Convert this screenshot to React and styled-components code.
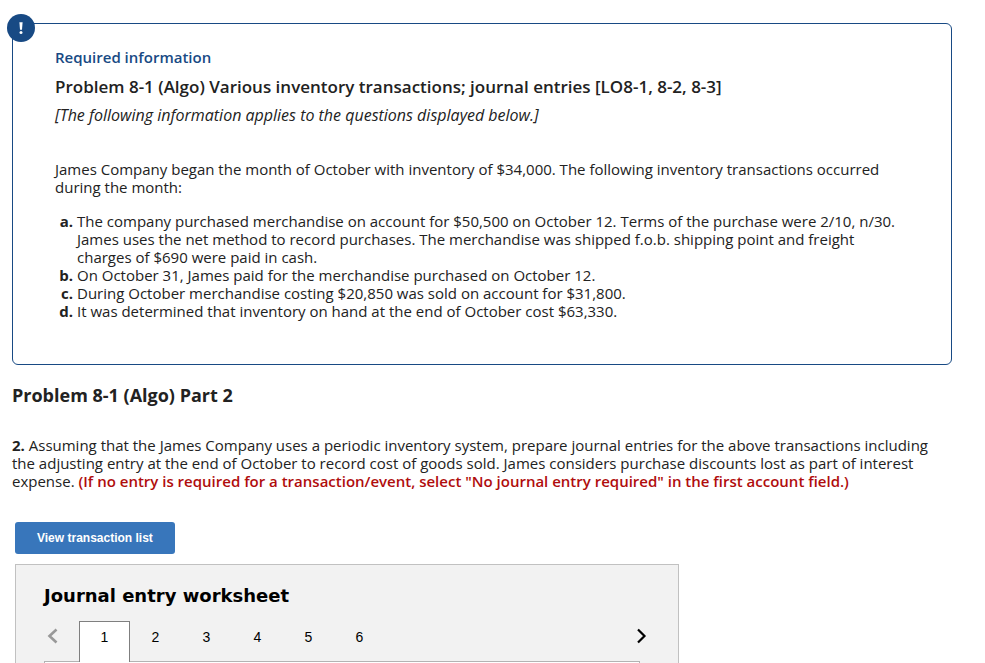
import React, { useState } from "react";
import styled, { createGlobalStyle } from "styled-components";

const GlobalStyle = createGlobalStyle`
  *, *::before, *::after { box-sizing: border-box; }
  body {
    margin: 0;
    background: #fff;
    color: #222;
    font-family: "Open Sans", "Noto Sans", sans-serif;
    font-size: 15px;
    line-height: 18px;
  }
`;

const Page = styled.main`
  padding: 23px 33px 0 12px;
  height: 100vh;
  overflow: hidden;
`;

const InfoCard = styled.section`
  position: relative;
  border: 1px solid #184a84;
  border-radius: 6px;
  padding: 23px 42px 44px;
`;

const AlertBadge = styled.span`
  position: absolute;
  top: -10px;
  left: -6px;
  width: 28px;
  height: 28px;
  border-radius: 50%;
  background: #184a84;
  color: #fff;
  display: grid;
  place-items: center;
`;

const InfoLabel = styled.h2`
  margin: 0 0 11px;
  color: #184a84;
  font-size: 15px;
  line-height: 20px;
  font-weight: 600;
`;

const ProblemTitle = styled.h1`
  margin: 0 0 10px;
  font-size: 17px;
  line-height: 18px;
  font-weight: 600;
`;

const Note = styled.p`
  margin: 0 0 36px;
  font-size: 16px;
  font-style: italic;
`;

const Intro = styled.p`
  margin: 0 0 16px;
`;

const Transactions = styled.ul`
  margin: 0;
  padding: 0 0 0 4px;
  list-style: none;
`;

const Transaction = styled.li`
  display: grid;
  grid-template-columns: 14px 1fr;
  column-gap: 4px;
`;

const Marker = styled.b`
  text-align: right;
`;

const PartTitle = styled.h2`
  margin: 19px 0 30px;
  font-size: 18px;
  line-height: 22px;
  font-weight: 700;
`;

const Question = styled.p`
  margin: 0 0 32px;
`;

const Warning = styled.strong`
  color: #b00d0d;
  font-weight: 600;
`;

const ListButton = styled.button`
  display: block;
  margin: 0 0 10px 3px;
  padding: 0 22px;
  height: 32px;
  border: 0;
  border-radius: 3px;
  background: #3876bb;
  color: #fff;
  font: bold 12px/16px "Liberation Sans", Arial, sans-serif;
  cursor: pointer;
`;

const Worksheet = styled.section`
  margin-left: 3px;
  max-width: 664px;
  border: 1px solid #c1c1c1;
  background: #f2f2f2;
  padding: 19px 28px 0;
  color: #000;
`;

const WorksheetTitle = styled.h2`
  margin: 0 0 13px;
  font: bold 18px/24px "DejaVu Sans", Verdana, sans-serif;
`;

const TabBar = styled.nav`
  display: flex;
  align-items: flex-start;
`;

const Tab = styled.button`
  width: 51px;
  height: 41px;
  padding: 0 0 10px;
  border: 1px solid ${(p) => (p.$active ? "#7f7f7f" : "transparent")};
  border-bottom: 0;
  background: ${(p) => (p.$active ? "#fff" : "transparent")};
  color: #000;
  font: 14px/16px "Liberation Sans", Arial, sans-serif;
  position: relative;
  cursor: pointer;
`;

const Arrow = styled.button`
  display: grid;
  place-items: center;
  width: 16px;
  height: 30px;
  padding: 0;
  border: 0;
  background: none;
  color: ${(p) => (p.disabled ? "#999" : "#000")};
  margin: ${(p) => (p.$next ? "0 0 0 auto" : "0 19px 0 0")};
`;

const Sheet = styled.div`
  border: 1px solid #b3b3b3;
  background: #fff;
  height: 200px;
  margin: -1px 10px 0 0;
`;

const transactions = [
  ["a.", "The company purchased merchandise on account for $50,500 on October 12. Terms of the purchase were 2/10, n/30. James uses the net method to record purchases. The merchandise was shipped f.o.b. shipping point and freight charges of $690 were paid in cash."],
  ["b.", "On October 31, James paid for the merchandise purchased on October 12."],
  ["c.", "During October merchandise costing $20,850 was sold on account for $31,800."],
  ["d.", "It was determined that inventory on hand at the end of October cost $63,330."],
];

const Chevron = ({ d, weight }) => (
  <svg width="16" height="18" viewBox="0 0 16 18" fill="none" stroke="currentColor" strokeWidth={weight} aria-hidden="true">
    <path d={d} />
  </svg>
);

export default function App() {
  const [active, setActive] = useState(1);
  return (
    <>
      <GlobalStyle />
      <Page>
        <InfoCard>
          <AlertBadge>
            <svg width="28" height="28" viewBox="0 0 28 28" fill="#fff" aria-hidden="true">
              <path d="M12.4 8.2h3.2l-.6 7.6h-2z" />
              <circle cx="14" cy="18.4" r="1.5" />
            </svg>
          </AlertBadge>
          <InfoLabel>Required information</InfoLabel>
          <ProblemTitle>Problem 8-1 (Algo) Various inventory transactions; journal entries [LO8-1, 8-2, 8-3]</ProblemTitle>
          <Note>[The following information applies to the questions displayed below.]</Note>
          <Intro>
            James Company began the month of October with inventory of $34,000. The following inventory transactions occurred during the month:
          </Intro>
          <Transactions>
            {transactions.map(([marker, text]) => (
              <Transaction key={marker}>
                <Marker>{marker}</Marker>
                <span>{text}</span>
              </Transaction>
            ))}
          </Transactions>
        </InfoCard>
        <PartTitle>Problem 8-1 (Algo) Part 2</PartTitle>
        <Question>
          <b>2.</b> Assuming that the James Company uses a periodic inventory system, prepare journal entries for the above transactions including the adjusting entry at the end of October to record cost of goods sold. James considers purchase discounts lost as part of interest expense.{" "}
          <Warning>(If no entry is required for a transaction/event, select "No journal entry required" in the first account field.)</Warning>
        </Question>
        <ListButton type="button">View transaction list</ListButton>
        <Worksheet>
          <WorksheetTitle>Journal entry worksheet</WorksheetTitle>
          <TabBar aria-label="Journal entries">
            <Arrow type="button" aria-label="Previous entry" disabled={active === 1} onClick={() => setActive(active - 1)}>
              <Chevron weight="2.6" d="M12.5 2.5 5.5 9l7 6.5" />
            </Arrow>
            {[1, 2, 3, 4, 5, 6].map((n) => (
              <Tab key={n} type="button" $active={n === active} onClick={() => setActive(n)}>
                {n}
              </Tab>
            ))}
            <Arrow type="button" $next aria-label="Next entry" disabled={active === 6} onClick={() => setActive(active + 1)}>
              <Chevron weight="2.2" d="M4 2.5l6.5 6.5-6.5 6.5" />
            </Arrow>
          </TabBar>
          <Sheet />
        </Worksheet>
      </Page>
    </>
  );
}
